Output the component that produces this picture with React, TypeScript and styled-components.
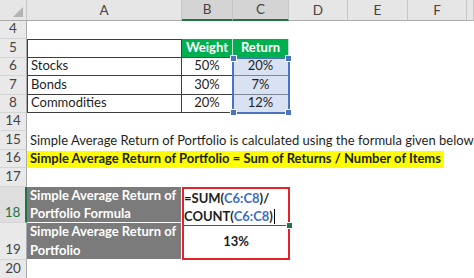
import React from 'react';
import styled, { createGlobalStyle, css } from 'styled-components';

const GlobalStyle = createGlobalStyle`
  html, body { margin: 0; padding: 0; background: #fff; }
  body { font-family: Lato, "Liberation Sans", sans-serif; overflow: hidden; }
`;

const ROW = 18.4;
const FONT = 13;
const GREEN_ACTIVE = '#217346';
const TABLE_LINE = '#3d3d3d';

const Sheet = styled.div`
  display: grid;
  width: 474px;
  height: 278px;
  overflow: hidden;
  grid-template-columns: 27px 155px 51px 56px 59px 60px 59px 1fr;
  grid-template-rows: 21px repeat(9, ${ROW}px) repeat(2, ${ROW * 2}px) ${ROW}px;
  font-size: ${FONT}px;
  color: #1e1e1e;
`;

const Corner = styled.div`
  grid-row: 1;
  grid-column: 1;
  position: relative;
  background: #e6e6e6;
  border-right: 1px solid #c6c6c6;
  border-bottom: 1px solid #ababab;
  &::after {
    content: '';
    position: absolute;
    right: 3px;
    bottom: 3px;
    width: 0;
    height: 0;
    border-style: solid;
    border-width: 0 0 10px 10px;
    border-color: transparent transparent #b4b4b4 transparent;
  }
`;

const ColHead = styled.div<{ $col: number; $sel?: boolean }>`
  grid-row: 1;
  grid-column: ${(p) => p.$col};
  display: flex;
  align-items: center;
  justify-content: center;
  box-sizing: border-box;
  padding-bottom: 1px;
  background: ${(p) => (p.$sel ? '#d4d4d4' : '#e6e6e6')};
  border-right: 1px solid #c6c6c6;
  border-bottom: ${(p) => (p.$sel ? `2px solid ${GREEN_ACTIVE}` : '1px solid #ababab')};
  color: #444;
  font-size: 13.5px;
`;

const RowHead = styled.div<{ $row: number; $active?: boolean }>`
  grid-column: 1;
  grid-row: ${(p) => p.$row};
  display: flex;
  align-items: flex-end;
  justify-content: center;
  box-sizing: border-box;
  padding-bottom: 1px;
  background: ${(p) => (p.$active ? '#dedede' : '#e9e9e9')};
  border-bottom: 1px solid #d4d4d4;
  border-right: ${(p) => (p.$active ? `2px solid ${GREEN_ACTIVE}` : '1px solid #ababab')};
  color: ${(p) => (p.$active ? GREEN_ACTIVE : '#444')};
  font-size: 13.5px;
  line-height: 17px;
`;

type Fill = 'none' | 'green' | 'blue';

const TableCell = styled.div<{
  $row: number;
  $col: number;
  $fill?: Fill;
  $center?: boolean;
  $top?: boolean;
  $left?: boolean;
}>`
  grid-row: ${(p) => p.$row};
  grid-column: ${(p) => p.$col};
  display: flex;
  align-items: flex-end;
  justify-content: ${(p) => (p.$center ? 'center' : 'flex-start')};
  box-sizing: border-box;
  padding: 0 3px 1px;
  line-height: 17px;
  white-space: nowrap;
  border-right: 1px solid ${TABLE_LINE};
  border-bottom: 1px solid ${TABLE_LINE};
  ${(p) => p.$top && css`border-top: 1px solid ${TABLE_LINE};`}
  ${(p) => p.$left && css`border-left: 1px solid ${TABLE_LINE};`}
  ${(p) =>
    p.$fill === 'green' &&
    css`
      background: #00b050;
      color: #fff;
      font-weight: 700;
      border-right-color: #c9d9cf;
      border-bottom-color: #2d5e3f;
    `}
  ${(p) =>
    p.$fill === 'blue' &&
    css`
      background: #d9e2f3;
      border-bottom-color: #7d8899;
    `}
`;

const Selection = styled.div<{ $row: string; $col: number }>`
  grid-row: ${(p) => p.$row};
  grid-column: ${(p) => p.$col};
  position: relative;
  box-sizing: border-box;
  margin: -1px;
  border: 2px solid #4a74c2;
  pointer-events: none;
`;

const Handle = styled.span<{ $x: 'left' | 'right'; $y: 'top' | 'bottom'; $color?: string }>`
  position: absolute;
  width: 5px;
  height: 5px;
  background: ${(p) => p.$color ?? '#4a74c2'};
  border: 1px solid #fff;
  ${(p) => (p.$x === 'left' ? 'left: -4px;' : 'right: -4px;')}
  ${(p) => (p.$y === 'top' ? 'top: -4px;' : 'bottom: -4px;')}
`;

const LongText = styled.div<{ $row: number }>`
  grid-row: ${(p) => p.$row};
  grid-column: 2 / -1;
  display: flex;
  align-items: flex-end;
  white-space: nowrap;
  padding: 0 0 1px 3px;
  line-height: 17px;
`;

const Highlight = styled.div<{ $row: number }>`
  grid-row: ${(p) => p.$row};
  grid-column: 2 / -1;
  display: flex;
  align-items: stretch;
  padding: 1px 0 0;
  white-space: nowrap;
`;

const Marker = styled.span`
  display: flex;
  align-items: flex-end;
  background: #ffff00;
  padding: 0 3px 1px;
  line-height: 17px;
  font-weight: 700;
`;

const DarkCell = styled.div<{ $row: number }>`
  grid-row: ${(p) => p.$row};
  grid-column: 2;
  display: flex;
  flex-direction: column;
  justify-content: flex-end;
  box-sizing: border-box;
  background: #7b7b7b;
  color: #fff;
  font-weight: 700;
  line-height: ${ROW}px;
  padding: 0 3px;
  margin: 0 1px 1px 0;
  white-space: nowrap;
`;

const RedBox = styled.div`
  grid-row: 11 / span 2;
  grid-column: 3 / span 2;
  display: grid;
  grid-template-rows: 1fr 1fr;
  box-sizing: border-box;
  border: 2px solid #e3222a;
  margin-right: -1px;
`;

const FormulaCell = styled.div`
  position: relative;
  display: flex;
  flex-direction: column;
  justify-content: flex-end;
  border-bottom: 1px solid ${GREEN_ACTIVE};
  margin-right: -1px;
  font-weight: 700;
  line-height: ${ROW}px;
  white-space: nowrap;
`;

const Ref = styled.span`
  color: #3b6ec6;
`;

const Caret = styled.span`
  display: inline-block;
  width: 0;
  height: 15px;
  border-left: 1px solid #000;
  margin-left: 1px;
  vertical-align: -3px;
`;

const ResultCell = styled.div`
  display: flex;
  align-items: center;
  justify-content: center;
  font-weight: 700;
  padding-bottom: 2px;
`;

const rowNumbers: { n: string; line: number; active?: boolean }[] = [
  { n: '4', line: 2 },
  { n: '5', line: 3 },
  { n: '6', line: 4 },
  { n: '7', line: 5 },
  { n: '8', line: 6 },
  { n: '14', line: 7 },
  { n: '15', line: 8 },
  { n: '16', line: 9 },
  { n: '17', line: 10 },
  { n: '18', line: 11, active: true },
  { n: '19', line: 12 },
  { n: '20', line: 13 },
];

const columns = ['A', 'B', 'C', 'D', 'E', 'F', ''];

const assets = [
  { name: 'Stocks', weight: '50%', ret: '20%' },
  { name: 'Bonds', weight: '30%', ret: '7%' },
  { name: 'Commodities', weight: '20%', ret: '12%' },
];

export default function App() {
  return (
    <>
      <GlobalStyle />
      <Sheet>
        <Corner />
        {columns.map((c, i) => (
          <ColHead key={i} $col={i + 2} $sel={c === 'B' || c === 'C'}>
            {c}
          </ColHead>
        ))}
        {rowNumbers.map((r) => (
          <RowHead key={r.n} $row={r.line} $active={r.active}>
            {r.n}
          </RowHead>
        ))}

        <TableCell $row={3} $col={2} $top $left />
        <TableCell $row={3} $col={3} $fill="green" $center>
          Weight
        </TableCell>
        <TableCell $row={3} $col={4} $fill="green" $center>
          Return
        </TableCell>
        {assets.map((a, i) => (
          <React.Fragment key={a.name}>
            <TableCell $row={4 + i} $col={2} $left>
              {a.name}
            </TableCell>
            <TableCell $row={4 + i} $col={3} $center>
              {a.weight}
            </TableCell>
            <TableCell $row={4 + i} $col={4} $fill="blue" $center>
              {a.ret}
            </TableCell>
          </React.Fragment>
        ))}
        <Selection $row="4 / span 3" $col={4}>
          <Handle $x="left" $y="top" />
          <Handle $x="right" $y="top" />
          <Handle $x="left" $y="bottom" />
          <Handle $x="right" $y="bottom" />
        </Selection>

        <LongText $row={8}>
          Simple Average Return of Portfolio is calculated using the formula given below
        </LongText>
        <Highlight $row={9}>
          <Marker>Simple Average Return of Portfolio = Sum of Returns / Number of Items</Marker>
        </Highlight>

        <DarkCell $row={11}>
          <span>Simple Average Return of</span>
          <span>Portfolio Formula</span>
        </DarkCell>
        <DarkCell $row={12}>
          <span>Simple Average Return of</span>
          <span>Portfolio</span>
        </DarkCell>

        <RedBox>
          <FormulaCell>
            <span>
              =SUM(<Ref>C6:C8</Ref>)/
            </span>
            <span>
              COUNT(<Ref>C6:C8</Ref>)<Caret />
            </span>
            <Handle $x="right" $y="bottom" $color={GREEN_ACTIVE} />
          </FormulaCell>
          <ResultCell>13%</ResultCell>
        </RedBox>
      </Sheet>
    </>
  );
}
